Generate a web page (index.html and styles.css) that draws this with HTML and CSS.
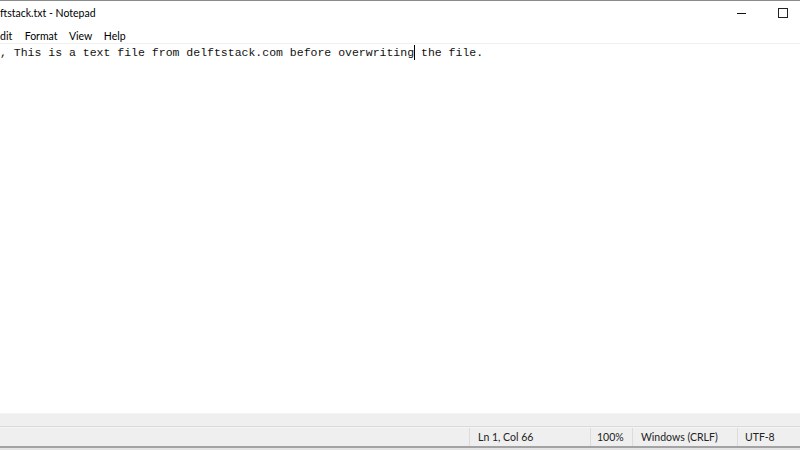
FILE: index.html
```html
<!DOCTYPE html>
<html>
<head>
<meta charset="utf-8">
<link rel="stylesheet" href="styles.css">
</head>
<body>
<div class="window">
  <div class="titlebar">
    <div class="title">ftstack.txt - Notepad</div>
    <div class="controls">
      <div class="ctl ctl-min"><span class="min-line"></span></div>
      <div class="ctl ctl-max"><span class="max-box"></span></div>
    </div>
  </div>
  <div class="menubar">
    <span class="menu-item first">dit</span>
    <span class="menu-item">Format</span>
    <span class="menu-item">View</span>
    <span class="menu-item">Help</span>
  </div>
  <div class="editor">
    <div class="line">, This is a text file from delftstack.com before overwriting<span class="caret"></span> the file.</div>
  </div>
  <div class="hscroll"></div>
  <div class="statusbar">
    <div class="status-spacer"></div>
    <div class="cell cell-pos">Ln 1, Col 66</div>
    <div class="cell cell-zoom">100%</div>
    <div class="cell cell-eol">Windows (CRLF)</div>
    <div class="cell cell-enc">UTF-8</div>
  </div>
  <div class="bottom-edge"></div>
</div>
</body>
</html>
```
FILE: styles.css
```css
* { box-sizing: border-box; }
html, body {
  margin: 0;
  padding: 0;
  width: 800px;
  height: 450px;
  overflow: hidden;
  background: #ffffff;
}
body {
  font-family: "Lato", "Noto Sans", sans-serif;
  font-size: 10.5px;
  color: #000;
}
.window {
  display: flex;
  flex-direction: column;
  height: 450px;
  width: 800px;
}
.titlebar {
  height: 29px;
  border-top: 1px solid #8a8a8a;
  display: flex;
  align-items: center;
  justify-content: space-between;
  background: #fff;
}
.title {
  padding-left: 0;
  line-height: 16px;
  margin-top: -4px;
  color: #000;
}
.controls {
  display: flex;
  height: 100%;
}
.ctl {
  display: flex;
  align-items: center;
}
.ctl-min { width: 41px; justify-content: flex-start; }
.ctl-max { width: 22px; justify-content: flex-start; }
.min-line {
  display: block;
  width: 9px;
  height: 1px;
  background: #111;
  margin-top: -4px;
}
.max-box {
  display: block;
  width: 10px;
  height: 10px;
  border: 1px solid #222;
  margin-top: -4px;
}
.menubar {
  height: 14px;
  display: flex;
  align-items: center;
  line-height: 14px;
  gap: 11.5px;
  border-bottom: 1px solid #f0f0f0;
  box-sizing: content-box;
}
.menu-item { color: #000; }
.menu-item.first { margin-right: 1px; }
.editor {
  flex: 1;
  padding-top: 1px;
  background: #fff;
}
.line {
  font-family: "Liberation Mono", "DejaVu Sans Mono", monospace;
  font-size: 11.5px;
  line-height: 15px;
  white-space: pre;
  color: #111;
}
.caret {
  display: inline-block;
  width: 1px;
  height: 15px;
  margin-right: -1px;
  background: #000;
  vertical-align: top;
}
.hscroll {
  height: 14px;
  background: #efefef;
  border-top: 1px solid #f4f4f4;
  border-bottom: 1px solid #dadada;
}
.statusbar {
  height: 19px;
  background: #efefef;
  border-top: 1px solid #f4f4f4;
  display: flex;
  align-items: stretch;
  color: #222;
}
.status-spacer { flex: 1; }
.cell {
  display: flex;
  align-items: center;
  border-left: 1px solid #dcdcdc;
  padding-left: 8px;
}
.cell-pos { width: 121px; }
.cell-zoom { width: 42px; padding-left: 6px; }
.cell-eol { width: 105px; }
.cell-enc { width: 63px; padding-left: 7px; }
.bottom-edge {
  height: 4px;
  border-top: 2px solid #a3a3a3;
  background: #e4e4e4;
}
```
